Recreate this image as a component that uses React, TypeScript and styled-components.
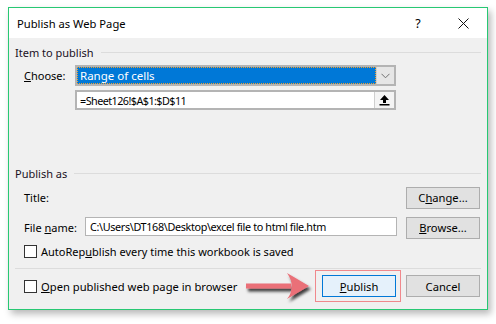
import React from 'react'
import styled, { createGlobalStyle } from 'styled-components'

const GlobalStyle = createGlobalStyle`
  html, body {
    margin: 0;
    padding: 0;
    background: #ffffff;
  }
  body {
    font-family: 'Noto Sans', 'Open Sans', sans-serif;
    font-size: 11px;
    color: #000;
  }
`

const Page = styled.div`
  width: 496px;
  height: 324px;
  padding: 7px 0 0 8px;
  box-sizing: border-box;
  overflow: hidden;
`

const Dialog = styled.div`
  width: 480px;
  height: 303px;
  box-sizing: border-box;
  border: 1px solid #27c873;
  background: #f0f0f0;
  box-shadow: 3px 4px 7px rgba(0, 0, 0, 0.28);
  display: flex;
  flex-direction: column;
`

const TitleBar = styled.div`
  height: 30px;
  background: #ffffff;
  display: flex;
  align-items: center;
  padding-left: 8px;
  font-size: 11.2px;
`

const TitleText = styled.div`
  flex: 1;
`

const TitleIcon = styled.div<{ $w: number; $gap?: number }>`
  width: ${p => p.$w}px;
  margin-right: ${p => p.$gap || 0}px;
  display: flex;
  justify-content: center;
  align-items: center;
  font-size: 12.5px;
`

const Body = styled.div`
  flex: 1;
  padding: 6px 6px 0 6px;
  display: flex;
  flex-direction: column;
`

const GroupHeader = styled.div<{ $top?: number }>`
  display: flex;
  align-items: center;
  height: 16px;
  margin-top: ${p => p.$top || 0}px;
  color: #1a1024;
  span {
    white-space: nowrap;
  }
  &::after {
    content: '';
    flex: 1;
    height: 1px;
    background: #dcdcdc;
    margin-left: 7px;
  }
`

const Row = styled.div<{ $top: number; $h: number }>`
  display: flex;
  align-items: center;
  margin-top: ${p => p.$top}px;
  height: ${p => p.$h}px;
`

const Label = styled.div<{ $w: number }>`
  width: ${p => p.$w}px;
  margin-left: 9px;
  white-space: nowrap;
  flex-shrink: 0;
`

const Key = styled.span`
  text-decoration: underline;
  text-underline-offset: 1px;
`

const SelectBox = styled.div`
  width: 321px;
  height: 21px;
  box-sizing: border-box;
  border: 2px solid #b4b4b4;
  background: #fff;
  display: flex;
`

const SelectValue = styled.div`
  flex: 1;
  background: #0078d7;
  color: #fff;
  outline: 1px dotted #f0a030;
  outline-offset: -1px;
  display: flex;
  align-items: center;
  padding-left: 3px;
  font-size: 11.5px;
`

const DropButton = styled.div`
  width: 17px;
  background: #e6e6e6;
  border-left: 1px solid #d0d0d0;
  display: flex;
  align-items: center;
  justify-content: center;
`

const RangeBox = styled.div`
  width: 321px;
  height: 20px;
  box-sizing: border-box;
  border: 2px solid #b4b4b4;
  background: #fff;
  display: flex;
  margin-left: 60px;
`

const RangeText = styled.div`
  flex: 1;
  display: flex;
  align-items: center;
  padding-left: 3px;
  font-size: 10.8px;
  letter-spacing: -0.55px;
`

const CollapseButton = styled.div`
  width: 19px;
  background: #f4f4f4;
  border-left: 1px solid #cfcfcf;
  display: flex;
  align-items: center;
  justify-content: center;
`

const TextInput = styled.div`
  width: 312px;
  height: 19px;
  box-sizing: border-box;
  border: 1px solid #b4b4b4;
  background: #fff;
  display: flex;
  align-items: center;
  padding-left: 4px;
  font-size: 10.8px;
  letter-spacing: -0.35px;
  margin-bottom: 3px;
  white-space: nowrap;
  overflow: hidden;
`

const Button = styled.div<{ $primary?: boolean }>`
  width: 74px;
  height: 22px;
  box-sizing: border-box;
  border: 1px solid ${p => (p.$primary ? '#0078d7' : '#adadad')};
  background: ${p => (p.$primary ? '#e5f1fb' : '#e1e1e1')};
  display: flex;
  align-items: center;
  justify-content: center;
  font-size: 11.2px;
  flex-shrink: 0;
`

const RightButton = styled(Button)`
  margin-left: auto;
  margin-right: 1px;
`

const Check = styled.div`
  width: 13px;
  height: 13px;
  box-sizing: border-box;
  border: 1px solid #333;
  background: #fff;
  margin-left: 9px;
  margin-right: 4px;
  flex-shrink: 0;
`

const CheckLabel = styled.div<{ $size: number }>`
  font-size: ${p => p.$size}px;
  white-space: nowrap;
`

const Separator = styled.div`
  height: 1px;
  background: #dcdcdc;
  margin-top: 9px;
`

const Highlight = styled.div`
  border: 1px solid #f0888c;
  padding: 4px 4px 4px 6px;
  margin-left: 4px;
  flex-shrink: 0;
`

const ArrowSvg = styled.svg`
  margin-left: auto;
  overflow: visible;
  flex-shrink: 0;
`

const CancelButton = styled(Button)`
  margin-left: 5px;
  margin-right: 1px;
`

function Chevron() {
  return (
    <svg width="9" height="6" viewBox="0 0 9 6">
      <path d="M0.5 0.8 L4.5 4.8 L8.5 0.8" fill="none" stroke="#707070" strokeWidth="1" />
    </svg>
  )
}

function CollapseIcon() {
  return (
    <svg width="11" height="12" viewBox="0 0 11 12">
      <path d="M5.5 1 L10 6 L7 6 L7 9 L4 9 L4 6 L1 6 Z" fill="#000" />
      <rect x="0.5" y="10" width="10" height="1.5" fill="#000" />
    </svg>
  )
}

function CloseIcon() {
  return (
    <svg width="11" height="11" viewBox="0 0 11 11">
      <path d="M0.5 0.5 L10.5 10.5 M10.5 0.5 L0.5 10.5" stroke="#111" strokeWidth="1" />
    </svg>
  )
}

function PointerArrow() {
  return (
    <ArrowSvg width="66" height="32" viewBox="0 0 66 32">
      <defs>
        <filter id="arrowShadow" x="-20%" y="-30%" width="150%" height="170%">
          <feDropShadow dx="2" dy="3" stdDeviation="1.6" floodColor="#000" floodOpacity="0.75" />
        </filter>
      </defs>
      <g filter="url(#arrowShadow)">
        <rect x="1" y="13.5" width="45" height="5" fill="#ea6f78" />
        <path d="M64 16 L42 3 Q47 10 46.5 16 Q47 23 42 29 Z" fill="#ea6f78" />
      </g>
    </ArrowSvg>
  )
}

export default function App() {
  return (
    <Page>
      <GlobalStyle />
      <Dialog>
        <TitleBar>
          <TitleText>Publish as Web Page</TitleText>
          <TitleIcon $w={20} $gap={11}>?</TitleIcon>
          <TitleIcon $w={48}>
            <CloseIcon />
          </TitleIcon>
        </TitleBar>
        <Body>
          <GroupHeader>
            <span>Item to publish</span>
          </GroupHeader>
          <Row $top={5} $h={21}>
            <Label $w={51}>
              <Key>C</Key>hoose:
            </Label>
            <SelectBox>
              <SelectValue>Range of cells</SelectValue>
              <DropButton>
                <Chevron />
              </DropButton>
            </SelectBox>
          </Row>
          <Row $top={4} $h={20}>
            <RangeBox>
              <RangeText>=Sheet126!$A$1:$D$11</RangeText>
              <CollapseButton>
                <CollapseIcon />
              </CollapseButton>
            </RangeBox>
          </Row>

          <GroupHeader $top={55}>
            <span>Publish as</span>
          </GroupHeader>
          <Row $top={6} $h={21}>
            <Label $w={61}>Title:</Label>
            <RightButton>
              C<Key>h</Key>ange...
            </RightButton>
          </Row>
          <Row $top={9} $h={21}>
            <Label $w={61}>
              File <Key>n</Key>ame:
            </Label>
            <TextInput>C:\Users\DT168\Desktop\excel file to html file.htm</TextInput>
            <RightButton>
              <Key>B</Key>rowse...
            </RightButton>
          </Row>
          <Row $top={6} $h={15}>
            <Check />
            <CheckLabel $size={11}>
              AutoRep<Key>u</Key>blish every time this workbook is saved
            </CheckLabel>
          </Row>
          <Separator />
          <Row $top={1} $h={32}>
            <Check />
            <CheckLabel $size={11.2}>
              <Key>O</Key>pen published web page in browser
            </CheckLabel>
            <PointerArrow />
            <Highlight>
              <Button $primary>
                <Key>P</Key>ublish
              </Button>
            </Highlight>
            <CancelButton>Cancel</CancelButton>
          </Row>
        </Body>
      </Dialog>
    </Page>
  )
}
